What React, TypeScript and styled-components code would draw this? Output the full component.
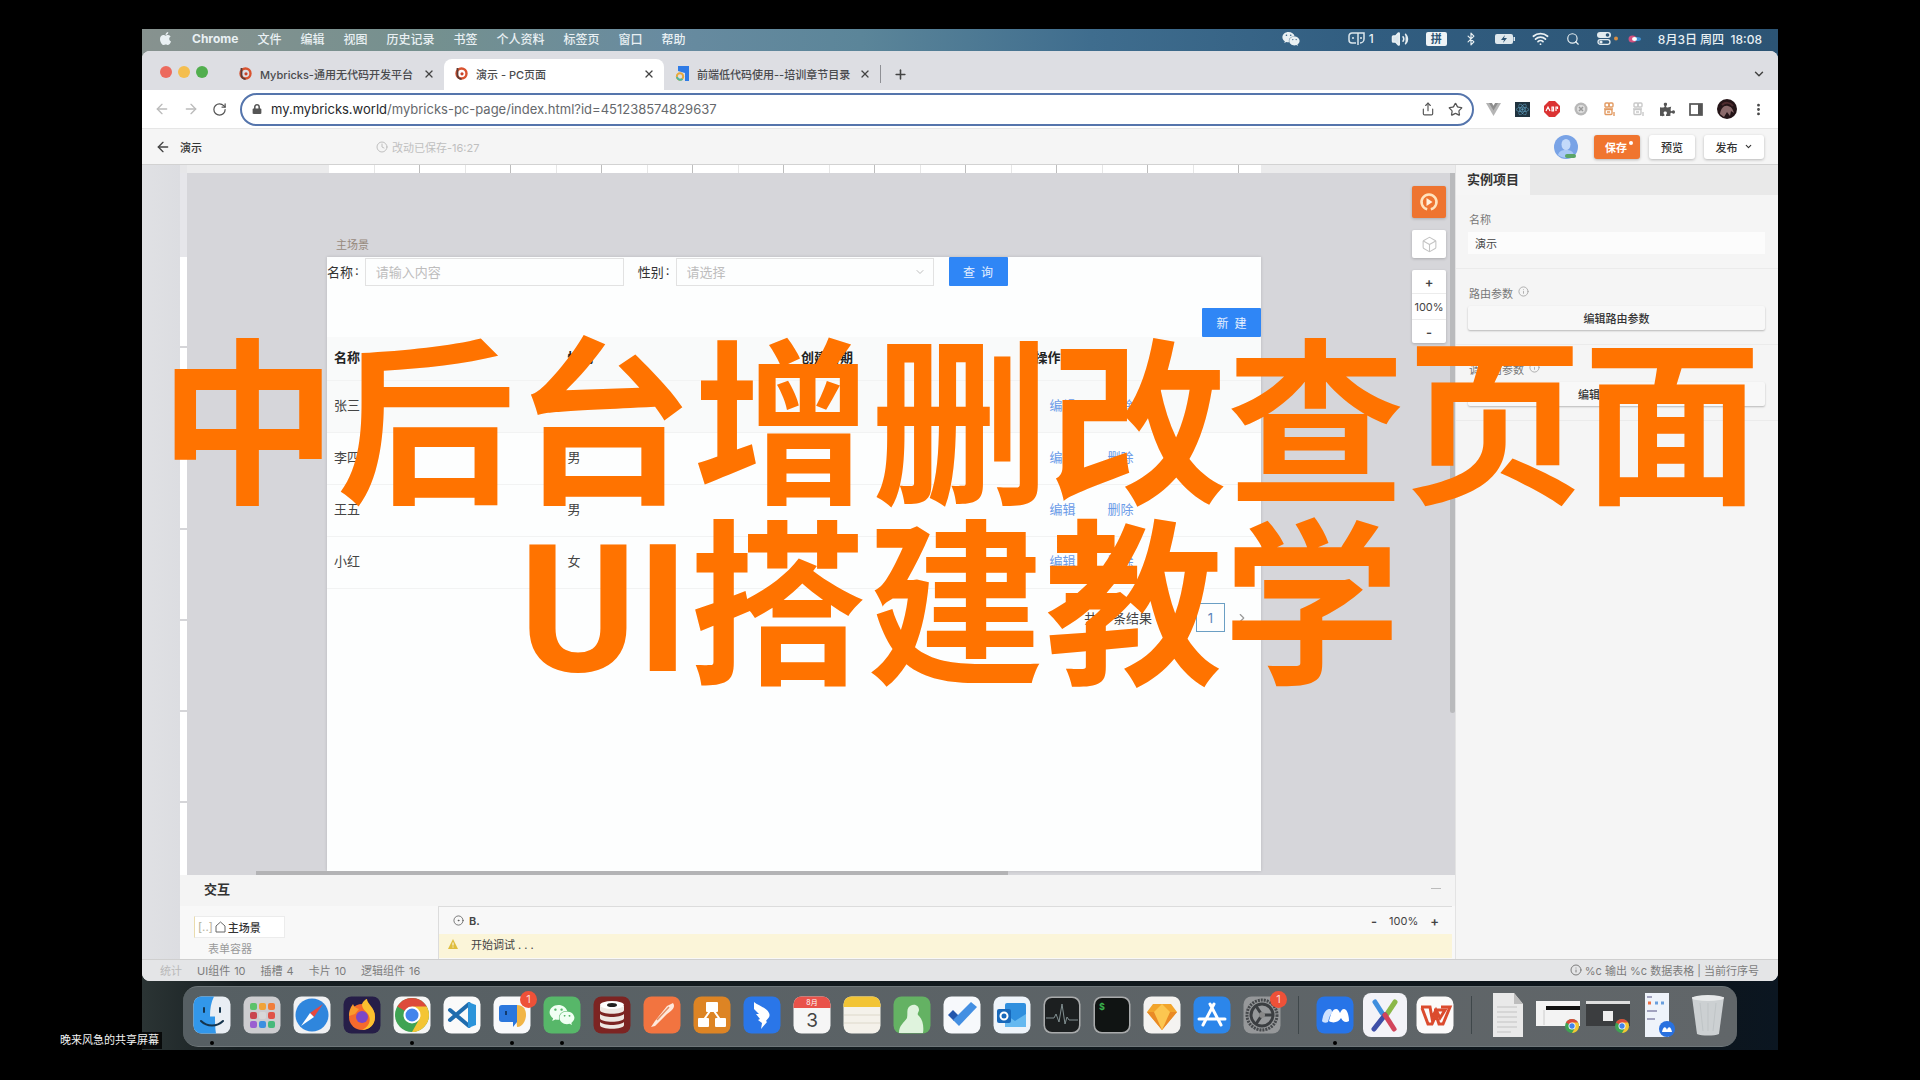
import React from "react";
import styled, { createGlobalStyle } from "styled-components";
import {
  ArrowLeft, ArrowRight, RotateCw, X, Plus, ChevronDown, ChevronLeft, ChevronRight, Share, Star,
  EllipsisVertical, Search, Volume2, Wifi, Bluetooth, Clock, Info, Box, CircleDot,
} from "lucide-react";
import { FaApple, FaWeixin, FaLock, FaPuzzlePiece, FaReact } from "react-icons/fa";

const Global = createGlobalStyle`
  *, *::before, *::after { box-sizing: border-box; }
  body { margin: 0; background: #000; }
  body, button, input, select, table {
    font-family: Inter, "Noto Sans CJK SC", sans-serif;
    font-size: 11px;
    color: #444;
  }
  button, input, select { margin: 0; padding: 0; border: 0; background: none; outline: none; }
  button { display: inline-flex; align-items: center; justify-content: center; cursor: pointer; }
  svg { display: block; flex: none; }
`;

const Page = styled.div`
  position: relative;
  display: flex;
  min-height: 100vh;
  padding: 29px 142px 30px;
  background: #000;
`;

const Desktop = styled.main`
  flex: 1;
  min-width: 0;
  display: flex;
  flex-direction: column;
  background: linear-gradient(90deg, #2b3434 0, #161e21 6%, #11191d 50%, #0d151b 94%, #0b1621 100%);
`;

/* ---------- system menu bar ---------- */

const MenuBar = styled.header`
  display: flex;
  align-items: center;
  height: 28px;
  margin-bottom: -6px;
  padding: 0 16px 9px;
  color: #e9f0f3;
  background: linear-gradient(90deg, #87928f 0, #74908f 18%, #688ba0 32%, #5b8599 44%, #3f6d8e 58%, #315d80 75%, #2c5474 100%);
`;

const MenuList = styled.nav`
  flex: 1;
  display: flex;
  align-items: center;
  gap: 19px;
`;

const MenuItem = styled.a<{ $strong?: boolean }>`
  color: inherit;
  text-decoration: none;
  white-space: nowrap;
  font-size: 12px;
  font-weight: ${(p) => (p.$strong ? 700 : 500)};
`;

const StatusList = styled.div`
  display: flex;
  align-items: center;
  gap: 17px;
  font-size: 12px;
  font-weight: 500;
  white-space: nowrap;
`;

const StatusGap = styled.span`
  width: 14px;
`;

const StatusPair = styled.span`
  display: flex;
  align-items: center;
  gap: 4px;
`;

const InputMethod = styled.span`
  width: 21px;
  height: 14px;
  border-radius: 2px;
  background: #eef3f6;
  color: #2c5474;
  font-size: 11px;
  font-weight: 700;
  line-height: 14px;
  text-align: center;
`;

/* ---------- browser window ---------- */

const Browser = styled.section`
  flex: 1;
  min-height: 0;
  display: flex;
  flex-direction: column;
  overflow: hidden;
  border-radius: 8px;
  background: #f5f5f5;
`;

const TabStrip = styled.div`
  display: flex;
  align-items: flex-end;
  height: 39px;
  flex: none;
  padding: 0 12px 0 18px;
  background: #dddee3;
`;

const Lights = styled.div`
  display: flex;
  align-items: center;
  gap: 6px;
  height: 37px;
  margin-right: 20px;
`;

const Light = styled.span<{ $color: string }>`
  width: 12px;
  height: 12px;
  border-radius: 50%;
  background: ${(p) => p.$color};
`;

const Tab = styled.div<{ $active?: boolean }>`
  display: flex;
  align-items: center;
  gap: 8px;
  width: ${(p) => (p.$active ? 220 : 216)}px;
  height: 31px;
  padding: 0 9px 2px 11px;
  border-radius: 8px 8px 0 0;
  background: ${(p) => (p.$active ? "#fff" : "transparent")};
`;

const TabTitle = styled.span`
  flex: 1;
  overflow: hidden;
  white-space: nowrap;
  color: #4a4b4e;
  font-weight: 500;
`;

const StripButton = styled.button<{ $divided?: boolean }>`
  height: 18px;
  margin-bottom: 7px;
  padding: 0 ${(p) => (p.$divided ? 12 : 0)}px;
  border-left: ${(p) => (p.$divided ? "1px solid #8f9095" : "0")};
`;

const Spacer = styled.div`
  flex: 1;
`;

const AddressRow = styled.div`
  display: flex;
  align-items: center;
  gap: 12px;
  height: 39px;
  flex: none;
  padding: 0 12px;
  background: #fff;
  border-bottom: 1px solid #e6e6e6;
`;

const NavButtons = styled.div`
  display: flex;
  gap: 13px;
`;

const AddressBox = styled.label`
  flex: 1;
  display: flex;
  align-items: center;
  height: 33px;
  margin-left: 1px;
  padding: 0 9px 0 10px;
  border: 2px solid #5575ac;
  border-radius: 17px;
  font-size: 13px;
`;

const Host = styled.span`
  margin-left: 9px;
  color: #25272a;
`;

const AddressInput = styled.input`
  flex: 1;
  font-size: 13px;
  color: #65686c;
`;

const AddressActions = styled.span`
  display: flex;
  gap: 13px;
`;

const Extensions = styled.div`
  display: flex;
  align-items: center;
  gap: 14px;
`;

/* ---------- application header ---------- */

const AppHeader = styled.div`
  display: flex;
  align-items: center;
  height: 36px;
  flex: none;
  padding: 0 14px 0 13px;
  background: #f5f5f5;
  border-bottom: 1px solid #d2d2d2;
`;

const PageName = styled.span`
  width: 196px;
  margin-left: 9px;
  color: #333;
  font-weight: 500;
`;

const SavedNote = styled.span`
  flex: 1;
  display: flex;
  align-items: center;
  gap: 4px;
  color: #bfbfbf;
`;

const UserBadge = styled.span`
  margin-right: 7px;
`;

const HeaderButton = styled.button<{ $primary?: boolean; $width: number }>`
  gap: 6px;
  width: ${(p) => p.$width}px;
  height: 24px;
  margin-left: 9px;
  border-radius: 3px;
  font-weight: ${(p) => (p.$primary ? 700 : 500)};
  color: ${(p) => (p.$primary ? "#fff" : "#333")};
  background: ${(p) => (p.$primary ? "#f0752f" : "#fff")};
  box-shadow: 0 1px 3px rgba(0, 0, 0, 0.25);
`;

const UnsavedDot = styled.span`
  width: 4px;
  height: 4px;
  margin: -8px -4px 0 -4px;
  border-radius: 50%;
  background: #fff;
`;

/* ---------- workspace ---------- */

const Workspace = styled.div`
  flex: 1;
  min-height: 0;
  display: flex;
`;

const ComponentRail = styled.aside`
  width: 38px;
  flex: none;
  background: linear-gradient(90deg, #e0e1e4, #dcdde1);
`;

const Center = styled.div`
  flex: 1;
  min-width: 0;
  display: flex;
  flex-direction: column;
`;

const Stage = styled.div`
  position: relative;
  flex: 1;
  min-height: 0;
  display: grid;
  grid-template-columns: 7px 1fr;
  grid-template-rows: 8px 1fr;
  background: #d6d6da;
`;

const Corner = styled.div`
  background: #e6e6e8;
`;

const TopRuler = styled.div`
  display: flex;
  padding: 0 194px 0 142px;
  background: #ebebec;
`;

const TopTicks = styled.div`
  flex: 1;
  background:
    repeating-linear-gradient(90deg, transparent 0 90px, #bdbdbd 90px 91px),
    repeating-linear-gradient(90deg, #fff 0 45px, #e6e6e6 45px 46px, #fff 46px 91px);
`;

const SideRuler = styled.div`
  display: flex;
  padding-top: 84px;
  background: #e6e6ea;
`;

const SideTicks = styled.div`
  flex: 1;
  background: repeating-linear-gradient(180deg, #fff 0 89px, #d5d5d8 89px 91px);
`;

const Canvas = styled.div`
  display: flex;
  flex-direction: column;
  padding: 64px 194px 4px 140px;
`;

const SceneName = styled.div`
  height: 20px;
  padding-left: 9px;
  line-height: 17px;
  color: #96897c;
`;

const Scene = styled.div`
  flex: 1;
  background: #fdfefe;
  box-shadow: 0 0 3px rgba(0, 0, 0, 0.15);
  font-size: 13px;
`;

const HorizontalScroll = styled.div`
  position: absolute;
  left: 76px;
  bottom: 0;
  width: 59%;
  height: 4px;
  background: #b3b3b5;
`;

const VerticalScroll = styled.div`
  position: absolute;
  right: 0;
  top: 8px;
  width: 5px;
  height: 76%;
  border-radius: 0 0 3px 3px;
  background: #b9babc;
`;

const Filters = styled.form`
  display: flex;
  align-items: center;
  height: 29px;
`;

const FieldLabel = styled.label`
  display: flex;
  gap: 2px;
  color: #333;
  font-size: 13px;
  white-space: nowrap;
  &::after { content: ":"; }
`;

const TextField = styled.input`
  width: 259px;
  height: 28px;
  margin: 0 14px 0 6px;
  padding: 0 10px;
  border: 1px solid #e2e2e2;
  font-size: 13px;
  &::placeholder { color: #bdbdbd; }
`;

const SelectWrap = styled.span`
  position: relative;
  margin: 0 15px 0 6px;
  svg { position: absolute; right: 8px; top: 8px; color: #bfbfbf; pointer-events: none; }
`;

const SelectField = styled.select`
  display: block;
  width: 258px;
  height: 28px;
  padding: 0 10px;
  appearance: none;
  border: 1px solid #e2e2e2;
  color: #bdbdbd;
  font-size: 13px;
`;

const PrimaryButton = styled.button`
  gap: 6px;
  width: 59px;
  height: 29px;
  border-radius: 1px;
  background: #2f86f6;
  color: #e6f0ff;
  font-size: 12px;
`;

const CreateRow = styled.div`
  display: flex;
  justify-content: flex-end;
  padding-top: 22px;
`;

const Table = styled.table`
  width: 100%;
  table-layout: fixed;
  border-collapse: collapse;
  th, td {
    height: 52px;
    padding: 0 7px 3px;
    border-bottom: 1px solid #f2f3f3;
    color: #444;
    font-size: 13px;
    font-weight: 400;
    text-align: left;
  }
  th { height: 43px; background: #f9fafa; color: #222; font-weight: 600; }
  tbody tr:first-child td { background: #f9fafa; }
`;

const RowActions = styled.span`
  display: flex;
  gap: 32px;
  padding-left: 15px;
`;

const RowLink = styled.a`
  color: #6b9be8;
  text-decoration: none;
`;

const Pagination = styled.div`
  display: flex;
  align-items: center;
  justify-content: flex-end;
  height: 30px;
  margin-top: 14px;
  padding-right: 2px;
  color: #444;
`;

const PageArrow = styled.button`
  width: 34px;
  height: 29px;
  color: #999;
`;

const PageNumber = styled.button`
  width: 29px;
  height: 29px;
  border: 1px solid #6b9fc4;
  color: #5c83b8;
  font-size: 13px;
`;

const PageTotal = styled.span`
  margin-right: 10px;
  font-size: 13px;
`;

const StageTools = styled.div`
  position: absolute;
  right: 9px;
  top: 21px;
  display: flex;
  flex-direction: column;
  gap: 12px;
`;

const ToolButton = styled.button<{ $primary?: boolean }>`
  width: 34px;
  height: ${(p) => (p.$primary ? 32 : 28)}px;
  border-radius: 2px;
  color: #c4c4c4;
  background: ${(p) => (p.$primary ? "#ee7430" : "#fff")};
  box-shadow: 0 1px 3px rgba(0, 0, 0, 0.2);
`;

const ZoomGroup = styled.div`
  display: grid;
  grid-template-rows: 23px 27px 23px;
  width: 34px;
  border-radius: 2px;
  background: #fff;
  box-shadow: 0 1px 3px rgba(0, 0, 0, 0.2);
`;

const ZoomValue = styled.output`
  display: flex;
  align-items: center;
  justify-content: center;
  border: solid #ececec;
  border-width: 1px 0;
`;

/* ---------- interaction panel ---------- */

const Interaction = styled.section`
  flex: none;
  display: flex;
  flex-direction: column;
  height: 84px;
  background: #f8f8f8;
`;

const InteractionHead = styled.div`
  display: flex;
  align-items: center;
  justify-content: space-between;
  height: 31px;
  padding: 0 14px 4px 24px;
  background: #f4f4f4;
`;

const InteractionTitle = styled.h2`
  margin: 0;
  color: #333;
  font-size: 13px;
  font-weight: 600;
`;

const Collapse = styled.button`
  width: 10px;
  height: 1px;
  background: #bbb;
`;

const InteractionBody = styled.div`
  flex: 1;
  display: flex;
`;

const SceneList = styled.div`
  width: 258px;
  padding: 10px 14px 0;
`;

const SceneTab = styled.button`
  justify-content: flex-start;
  gap: 2px;
  width: 91px;
  height: 22px;
  padding-left: 3px;
  border: 1px solid #ececec;
  border-left-color: #eadcae;
  background: #fff;
  color: #333;
  font-weight: 500;
`;

const Bracket = styled.span`
  color: #bdb9a6;
`;

const SceneChild = styled.div`
  padding: 3px 0 0 14px;
  line-height: 16px;
  color: #9a9a9a;
`;

const Flow = styled.div`
  flex: 1;
  margin-right: 3px;
  border: solid #dcdcdc;
  border-width: 1px 0 0 1px;
`;

const FlowBar = styled.div`
  display: flex;
  align-items: center;
  gap: 12px;
  height: 27px;
  padding: 0 13px 0 14px;
`;

const FlowMark = styled.span`
  display: flex;
  align-items: center;
  gap: 5px;
  font-weight: 600;
`;

const FlowLog = styled.div`
  display: flex;
  align-items: center;
  gap: 13px;
  height: 24px;
  padding: 0 9px 4px;
  background: #fbf5d9;
  color: #444;
`;

const GlyphButton = styled.button`
  font-size: 13px;
  font-weight: 600;
`;

/* ---------- property panel ---------- */

const Properties = styled.aside`
  width: 323px;
  flex: none;
  border-left: 1px solid #e3e3e3;
  background: #f5f5f5;
`;

const PanelTabs = styled.div`
  display: flex;
  height: 30px;
  background: #e9e9e9;
`;

const PanelTab = styled.button`
  width: 74px;
  padding-bottom: 3px;
  background: #f6f6f6;
  color: #333;
  font-size: 13px;
  font-weight: 600;
`;

const PropertyGroup = styled.div`
  padding: 14px 13px 14px 12px;
  border-bottom: 1px solid #ebebeb;
`;

const PropertyLabel = styled.label`
  display: flex;
  align-items: center;
  gap: 5px;
  height: 20px;
  margin-bottom: 3px;
  padding-left: 1px;
  color: #777;
  svg { margin-bottom: 4px; color: #aaa; }
`;

const PropertyInput = styled.input`
  display: block;
  width: 100%;
  height: 22px;
  padding: 0 7px;
  background: #fcfcfc;
`;

const PropertyButton = styled.button`
  width: 100%;
  height: 24px;
  border-radius: 2px;
  background: #f8f8f8;
  box-shadow: 0 1px 2px rgba(0, 0, 0, 0.25);
  color: #333;
  font-weight: 500;
`;

const StatusBar = styled.footer`
  display: flex;
  align-items: center;
  gap: 15px;
  height: 22px;
  flex: none;
  padding: 0 19px 1px 18px;
  border-top: 1px solid #cfcfcf;
  background: #e4e5e7;
  color: #7c7c7c;
`;

const Count = styled.span`
  display: flex;
  align-items: baseline;
  gap: 4px;
`;

const Faint = styled.span`
  color: #b9b9b9;
`;

const Hint = styled.span`
  display: flex;
  align-items: center;
  gap: 3px;
  margin-left: auto;
`;

/* ---------- dock ---------- */

const DockArea = styled.div`
  display: flex;
  justify-content: center;
  height: 69px;
  flex: none;
  padding-top: 5px;
`;

const Dock = styled.div`
  display: flex;
  gap: 12px;
  height: 61px;
  padding: 9px 10px;
  border-radius: 15px;
  background: linear-gradient(90deg, #565f63, #616669);
  border: 1px solid #6f777a;
  border-width: 1px 0;
`;

const DockItem = styled.button<{ $running?: boolean }>`
  position: relative;
  width: 38px;
  height: 38px;
  &::after {
    content: "";
    display: ${(p) => (p.$running ? "block" : "none")};
    position: absolute;
    left: 17px;
    bottom: -11px;
    width: 4px;
    height: 4px;
    border-radius: 50%;
    background: #000;
  }
`;

const Badge = styled.span`
  position: absolute;
  right: -6px;
  top: -5px;
  width: 17px;
  height: 17px;
  border-radius: 50%;
  background: #ee5138;
  color: #ffd9d0;
  line-height: 17px;
`;

const DockDivider = styled.span`
  width: 11px;
  margin: 0 0 3px;
  background: linear-gradient(#3f474a, #3f474a) center / 1px 100% no-repeat;
`;

const ShareLabel = styled.div`
  position: absolute;
  left: 60px;
  bottom: 31px;
  padding-right: 3px;
  background: rgba(0, 0, 0, 0.8);
  color: #f3f3f3;
  line-height: 17px;
`;

const Headline = styled.h1`
  position: absolute;
  inset: 0;
  display: flex;
  align-items: center;
  justify-content: center;
  margin: 0;
  padding-bottom: 40px;
  pointer-events: none;
  color: #ff7300;
  font-family: Roboto, "Noto Sans CJK SC", sans-serif;
  font-size: 178px;
  font-weight: 700;
  line-height: 181px;
  text-align: center;
  white-space: nowrap;
`;

/* ---------- drawings ---------- */

const BrickLogo = () => (
  <svg width="13" height="13" viewBox="0 0 13 13">
    <circle cx="6.5" cy="6.5" r="5" fill="none" stroke="#d9532f" strokeWidth="2.4" />
    <path d="M2.5 1v7a4 4 0 0 0 4 4" fill="none" stroke="#5b3b36" strokeWidth="1.8" />
    <circle cx="7" cy="6.8" r="1.6" fill="#c8432a" />
  </svg>
);

const DocLogo = () => (
  <svg width="14" height="15" viewBox="0 0 14 15">
    <path d="M3 0h11v15h-4V7L3 5z" fill="#2f7be6" />
    <circle cx="5" cy="10.5" r="3.2" fill="none" stroke="#e8a93a" strokeWidth="2" />
    <path d="M2 11a3.4 3.4 0 0 0 5.5 2" fill="none" stroke="#49b9a2" strokeWidth="2" />
  </svg>
);

const Avatar = () => (
  <svg width="24" height="24" viewBox="0 0 24 24">
    <circle cx="12" cy="12" r="12" fill="#79a3e6" />
    <ellipse cx="12" cy="9.5" rx="4.5" ry="5.5" fill="#c3dafa" />
    <path d="M4 20c1-4 4-5 8-5s7 1 8 5a12 12 0 0 1-16 0z" fill="#a9c8f5" />
    <rect x="11" y="19" width="11" height="4" rx="2" fill="#5aa567" />
  </svg>
);

const ShareScreen = () => (
  <svg width="17" height="14" viewBox="0 0 17 14" fill="none" stroke="#dbe6ec" strokeWidth="1.5">
    <path d="M8 11H4a3 3 0 0 1-3-3V4a3 3 0 0 1 3-3h12v6a4 4 0 0 1-4 4" />
    <path d="M10 1v12M4 6h2M12 6h2" />
  </svg>
);

const Battery = () => (
  <svg width="20" height="10" viewBox="0 0 20 10">
    <rect width="18" height="10" rx="2" fill="#dfe8ed" />
    <rect x="18.5" y="3" width="1.5" height="4" fill="#dfe8ed" />
    <path d="M10 1 6 6h3l-1 3 4-5H9z" fill="#2c5474" />
  </svg>
);

const Controls = () => (
  <svg width="21" height="13" viewBox="0 0 21 13">
    <rect width="14" height="6" rx="3" fill="#e3ebef" />
    <circle cx="10.5" cy="3" r="1.8" fill="#2c5474" />
    <rect x="1" y="7.7" width="12" height="4.6" rx="2.3" fill="none" stroke="#e3ebef" strokeWidth="1.3" />
    <circle cx="4" cy="10" r="1.6" fill="#e3ebef" />
    <circle cx="19" cy="6.5" r="2" fill="#d98f45" />
  </svg>
);

const StatusTail = styled.span`
  display: flex;
  align-items: center;
  gap: 10px;
`;

const Siri = () => (
  <svg width="13" height="10" viewBox="0 0 13 10">
    <ellipse cx="4.5" cy="5" rx="4" ry="3.5" fill="#d1507f" />
    <ellipse cx="9" cy="5" rx="4" ry="2" fill="#3f8fd0" />
    <ellipse cx="6.5" cy="5" rx="2.5" ry="2" fill="#fff" />
  </svg>
);

const VueMark = () => (
  <svg width="15" height="13" viewBox="0 0 15 13">
    <path d="M0 0h15L7.5 13z" fill="#b5b5b5" />
    <path d="M3 0h2.8l1.7 3 1.7-3H12L7.5 7.5z" fill="#8d8d8d" />
    <path d="M6 0h3L7.5 2.5z" fill="#fff" />
  </svg>
);

const Adblock = () => (
  <svg width="16" height="16" viewBox="0 0 16 16">
    <path d="M5 0h6l5 5v6l-5 5H5l-5-5V5z" fill="#db3333" />
    <path d="m2 10 2-4 2 4M8 10V6h1.5v4zM12 10V6h1.5v2" fill="none" stroke="#fff" strokeWidth="1.2" />
  </svg>
);

const ReactBadge = styled.span`
  display: flex;
  align-items: center;
  justify-content: center;
  width: 15px;
  height: 15px;
  background: #20333f;
  color: #5d9bbb;
`;

const Medal = () => (
  <svg width="14" height="14" viewBox="0 0 14 14">
    <circle cx="7" cy="7" r="6.5" fill="#b8b8b8" />
    <circle cx="7" cy="7" r="4" fill="#dedede" />
    <path d="m5 5 4 4m0-4-4 4" stroke="#999" strokeWidth="1.5" />
  </svg>
);

const Stamp = ({ color }: { color: string }) => (
  <svg width="15" height="15" viewBox="0 0 15 15" fill="none" stroke={color} strokeWidth="1.4">
    <rect x="3" y="1" width="4" height="4" rx="1" />
    <rect x="7" y="1" width="4" height="4" rx="1" />
    <rect x="3" y="7.5" width="7" height="5" rx="1" />
    <path d="M2 7h9M5 10h3M12 10v4" />
  </svg>
);

const SidePanel = () => (
  <svg width="14" height="13" viewBox="0 0 14 13">
    <rect x="1" y="1" width="12" height="11" fill="none" stroke="#555" strokeWidth="1.7" />
    <rect x="9" y="1" width="4" height="11" fill="#555" />
  </svg>
);

const Profile = () => (
  <svg width="20" height="20" viewBox="0 0 20 20">
    <circle cx="10" cy="10" r="10" fill="#251518" />
    <path d="M3 15c1-6 4-9 8-8s5 4 6 7l-3-2-1 5-3-4-3 5z" fill="#8b6a6b" />
    <path d="M5 6c3-3 8-3 11 1" fill="none" stroke="#4e2b2e" strokeWidth="2" />
  </svg>
);

const PlayRing = () => (
  <svg width="20" height="20" viewBox="0 0 20 20">
    <path d="M8.2 17.3a7.5 7.5 0 1 1 3.6 0" fill="none" stroke="#ffe3bd" strokeWidth="2.5" />
    <path d="M7.500 6v8l6-4z" fill="#fff0dc" />
  </svg>
);

const House = () => (
  <svg width="11" height="12" viewBox="0 0 11 12">
    <path d="M5.5 1 10 5v6H1V5z" fill="none" stroke="#666" strokeLinejoin="round" />
  </svg>
);

const Warning = () => (
  <svg width="10" height="10" viewBox="0 0 10 10">
    <path d="M5 0 10 10H0z" fill="#dfbd3c" />
    <path d="M5 3.5v3M5 7.5v1" stroke="#fff" />
  </svg>
);

const Tile = ({ bg, children }: { bg: string; children?: React.ReactNode }) => (
  <svg width="38" height="38" viewBox="0 0 38 38">
    <rect x=".5" y=".5" width="37" height="37" rx="8" fill={bg} />
    {children}
  </svg>
);

const ChromeDisc = ({ r = 17, cx = 19, cy = 19 }) => (
  <g transform={`translate(${cx} ${cy}) scale(${r / 17})`}>
    <circle r="17" fill="#3fa353" />
    <path d="M0 0-14.7-8.5A17 17 0 0 1 14.7-8.5z" fill="#dd4a3a" />
    <path d="M0-8.5H14.7A17 17 0 0 1 0 17L7.4 4z" fill="#f4c534" />
    <circle r="8.5" fill="#fff" />
    <circle r="6.5" fill="#4384ec" />
  </g>
);

const pads = ["#5cc26a", "#f0a33a", "#f07d3a", "#c9464f", "#d8d8d8", "#e05348", "#9a5fd0", "#3d8fe0", "#46b97b"];

type App = { name: string; icon: React.ReactNode; running?: boolean; badge?: string };

const apps: App[] = [
  { name: "访达", running: true, icon: <Tile bg="#e9eef4"><path d="M8.5.5H21c-3 6-4 12-4 20h5c0 6 0 11 1 17H8.5a8 8 0 0 1-8-8v-21a8 8 0 0 1 8-8z" fill="#3297ea" /><path d="M8 25c6 6 16 6 22 0M11 12v4M27 12v4" fill="none" stroke="#15344d" strokeWidth="2" strokeLinecap="round" /></Tile> },
  { name: "启动台", icon: <Tile bg="#cdcdd0">{pads.map((c, i) => <rect key={c} x={7 + (i % 3) * 9} y={7 + Math.floor(i / 3) * 9} width="7" height="7" rx="2" fill={c} />)}</Tile> },
  { name: "Safari", icon: <Tile bg="#f0f1f3"><circle cx="19" cy="19" r="16.5" fill="#2f86dd" /><path d="m30 8-9 13-4-4z" fill="#e6493f" /><path d="m8 30 9-13 4 4z" fill="#fff" /></Tile> },
  { name: "Firefox", icon: <Tile bg="#261e48"><circle cx="19" cy="21" r="13" fill="#f56a2c" /><path d="M19 8c1-3 4-5 5-5 0 5 8 8 8 18 0 8-6 13-13 13 8-3 10-12 5-17-2-3-5-4-5-9z" fill="#fbc02f" /><path d="M6 20c0-6 2-9 4-12 1 3 3 4 6 5l-4 5z" fill="#fa9b2c" /><circle cx="19" cy="21" r="6" fill="#7b47c7" /></Tile> },
  { name: "Chrome", running: true, icon: <Tile bg="#f6f6f6"><ChromeDisc /></Tile> },
  { name: "VS Code", icon: <Tile bg="#fafafa"><path d="m7 14 19 16M7 24 26 8" stroke="#1f6cae" strokeWidth="4" strokeLinecap="round" /><path d="m25 6 8 3v20l-8 3z" fill="#2c94da" /></Tile> },
  { name: "腾讯会议", running: true, badge: "1", icon: <Tile bg="#f8f9fb"><path d="M22 9c9-1 11 5 11 10s-3 12-9 12z" fill="#f1b547" /><path d="M9 9h15v17l-4 5v-5H9a3 3 0 0 1-3-3V12a3 3 0 0 1 3-3z" fill="#2b77dd" /><path d="M13 15v4" stroke="#123b70" strokeWidth="2" /></Tile> },
  { name: "微信", running: true, icon: <Tile bg="#57b769"><FaWeixin x="6" y="6" size={26} color="#f0fff3" /></Tile> },
  { name: "Sequel", icon: <Tile bg="#7c2422"><path d="M7 10v4c0 5 24 5 24 0v-4zM7 18v4c0 5 24 5 24 0v-4c-4 4-20 4-24 0zM7 26v3c0 5 24 5 24 0v-3c-4 4-20 4-24 0z" fill="#eee7e2" /><ellipse cx="19" cy="9" rx="12" ry="4" fill="#fff" /><ellipse cx="19" cy="9" rx="5" ry="2" fill="#222" /></Tile> },
  { name: "Postman", icon: <Tile bg="#f27440"><path d="M30 7c3 4-1 8-6 11L12 30l-4 1 4-6L24 10z" fill="#ffe9dc" /><path d="m14 24 12-13" stroke="#e29068" strokeWidth="1.5" /></Tile> },
  { name: "draw.io", icon: <Tile bg="#dd8424"><path d="M19 12 10 25M19 12l9 13" stroke="#fff" strokeWidth="2" /><rect x="13" y="6" width="12" height="10" rx="1" fill="#fff" /><rect x="5" y="22" width="11" height="9" rx="1" fill="#fff" /><rect x="22" y="22" width="11" height="9" rx="1" fill="#fff" /></Tile> },
  { name: "钉钉", icon: <Tile bg="#2a76e8"><path d="M11 6c5 4 13 6 15 11 2 4-2 6-3 8l1 1-6 7 1-6-4-3 2-1-4-5 3 0-5-5z" fill="#fff" /></Tile> },
  { name: "日历", icon: <Tile bg="#f6f6f6"><path d="M.5 12V8.5a8 8 0 0 1 8-8h21a8 8 0 0 1 8 8V12z" fill="#e9524a" /><text x="19" y="9" textAnchor="middle" fontSize="7" fill="#fff">8月</text><text x="19" y="31" textAnchor="middle" fontSize="19" fill="#444">3</text></Tile> },
  { name: "备忘录", icon: <Tile bg="#f4f1ea"><path d="M.5 11V8.5a8 8 0 0 1 8-8h21a8 8 0 0 1 8 8V11z" fill="#f2c435" /><path d="M1 19h36M1 27h36" stroke="#ddd8ca" /></Tile> },
  { name: "Dove", icon: <Tile bg="#64b263"><path d="M6 37c0-8 5-10 8-15 1-5-1-9 3-12 5-3 9 0 9 4 0 2-2 3-1 5 5 4 6 12 5 18z" fill="#dff3dd" /></Tile> },
  { name: "待办", icon: <Tile bg="#f7f9fc"><path d="m5 19 5-5 6 6-5 5z" fill="#2457ad" /><path d="m10 24 18-18 6 5-18 19z" fill="#448fe2" /></Tile> },
  { name: "Outlook", icon: <Tile bg="#eef4fa"><rect x="12" y="7" width="21" height="24" rx="2" fill="#2f8fde" /><path d="m12 18 10 7 11-7v13H12z" fill="#65b9f0" /><rect x="4" y="13" width="14" height="14" rx="2" fill="#1768ba" /><circle cx="11" cy="20" r="3.5" fill="none" stroke="#fff" strokeWidth="2" /></Tile> },
  { name: "活动监视器", icon: <Tile bg="#a9abac"><rect x="2" y="2" width="34" height="34" rx="7" fill="#1c1f20" /><path d="M3 22h8l2-4 3 8 3-18 3 20 2-7 2 3h9" fill="none" stroke="#829092" /></Tile> },
  { name: "iTerm", icon: <Tile bg="#a9abac"><rect x="2" y="2" width="34" height="34" rx="7" fill="#101413" /><text x="6" y="14" fontSize="9" fontWeight="700" fill="#39b24c">$</text></Tile> },
  { name: "Sketch", icon: <Tile bg="#f4f3f1"><path d="M10 8h18l6 8-15 18L4 16z" fill="#f2a52c" /><path d="M4 16h30L19 34z" fill="#e98a25" /><path d="m11 16 8-8 8 8-8 18z" fill="#fcc650" /></Tile> },
  { name: "App Store", icon: <Tile bg="#2c86ea"><path d="m21 8-11 21M17 8l11 21M6 23h26" stroke="#fff" strokeWidth="3" strokeLinecap="round" /></Tile> },
  { name: "系统设置", badge: "1", icon: <Tile bg="#96989a"><circle cx="19" cy="19" r="15" fill="none" stroke="#45484b" strokeWidth="3" strokeDasharray="2 1" /><circle cx="19" cy="19" r="11" fill="none" stroke="#3b3e41" strokeWidth="3" /><path d="M19 19h11M19 19l-6-9M19 19l-6 9" stroke="#3b3e41" strokeWidth="3" /><circle cx="19" cy="19" r="3" fill="#888" /></Tile> },
];

const pinned: App[] = [
  { name: "腾讯文档", running: true, icon: <Tile bg="#2774e8"><path d="M6 25c1-7 4-12 7-12s3 2 3 4c-2 2-3 5-4 9-2 1-5 1-6-1z" fill="#cfe2ff" /><path d="M13 25c2-8 4-12 7-12 2 0 3 2 4 4 1-2 2-4 4-4 3 0 5 6 5 12-3 2-6 1-8-3-2 4-8 6-12 3z" fill="#fff" /></Tile> },
  { name: "XMind", icon: <svg width="44" height="44" viewBox="0 0 44 44"><rect width="44" height="44" rx="8" fill="#f3f3f8" /><g fill="none" strokeWidth="5" strokeLinecap="round"><path d="m12 9 7 11" stroke="#3f8ede" /><path d="m32 9-8 12" stroke="#8bb848" /><path d="M22 22 11 36" stroke="#3e4fa8" /><path d="m22 22 9 14" stroke="#d2445b" /></g></svg> },
  { name: "WPS", icon: <Tile bg="#fbfafa"><path d="M5 11h9l2 11 4-8 4 8 5-8h-11" fill="none" stroke="#db4b2e" strokeWidth="3" /><path d="m6 12 6 16h4l4-9 3 9h4l7-17h-9" fill="none" stroke="#db4b2e" strokeWidth="3" /></Tile> },
];

const recents: App[] = [
  { name: "文稿", icon: <svg width="32" height="44" viewBox="0 0 32 44"><path d="M1 0h21l9 11v33H1z" fill="#e9e9e9" /><path d="M22 0v11h9z" fill="#bdbdbd" /><path d="M5 14h20M5 19h20M5 24h20M5 29h20M5 34h20M5 39h14" stroke="#cfcfcf" strokeWidth="1.5" /></svg> },
  { name: "浏览器窗口", icon: <svg width="44" height="36" viewBox="0 0 44 36"><path d="M0 4h44v25H0z" fill="#f3f3f3" /><path d="M10 9h34v4H10z" fill="#111" /><path d="M8 13v15" stroke="#ccc" /><ChromeDisc r={7} cx={36} cy={29} /></svg> },
  { name: "预览窗口", icon: <svg width="44" height="36" viewBox="0 0 44 36"><path d="M0 4h44v25H0z" fill="#3b3d3f" /><path d="M0 4h44v3H0z" fill="#ddd" /><path d="M17 14h10v10H17z" fill="#eee" /><ChromeDisc r={7} cx={36} cy={29} /></svg> },
  { name: "聊天窗口", icon: <svg width="34" height="44" viewBox="0 0 34 44"><path d="M4 0h24v44H4z" fill="#eef3fa" /><path d="M6 4h5M6 18h10M6 26h8" stroke="#88a" strokeWidth="1.5" /><path d="M7 10h3" stroke="#ef7045" strokeWidth="3" /><path d="M14 10h3M20 10h3" stroke="#699fdd" strokeWidth="3" /><circle cx="26" cy="36" r="8" fill="#2971df" /><path d="M21 39c1-6 4-6 5-2 1-4 4-4 5 2z" fill="#fff" /></svg> },
  { name: "废纸篓", icon: <svg width="34" height="42" viewBox="0 0 34 42"><path d="M1 3h32l-5 37c-5 2-17 2-22 0z" fill="#ccd0d2" /><ellipse cx="17" cy="4" rx="16" ry="3" fill="#e7e9ea" /><path d="m9 9 3 28M17 9v28M25 9l-3 28" stroke="#bfc4c6" /></svg> },
];

const menus = ["文件", "编辑", "视图", "历史记录", "书签", "个人资料", "标签页", "窗口", "帮助"];
const counts = [["UI组件", 10], ["插槽", 4], ["卡片", 10], ["逻辑组件", 16]];
const rows = [
  { name: "张三", gender: "" },
  { name: "李四", gender: "男" },
  { name: "王五", gender: "男" },
  { name: "小红", gender: "女" },
];

const DockApp = ({ name, icon, running, badge }: App) => (
  <DockItem aria-label={name} $running={running}>
    {icon}
    {badge && <Badge>{badge}</Badge>}
  </DockItem>
);

const BrowserTab = ({ title, icon, active }: { title: string; icon: React.ReactNode; active?: boolean }) => (
  <Tab $active={active}>
    {icon}
    <TabTitle>{title}</TabTitle>
    <button aria-label="关闭标签页"><X size={12} strokeWidth={2.5} /></button>
  </Tab>
);

export default function App() {
  return (
    <Page>
      <Global />
      <Desktop>
        <MenuBar>
          <MenuList>
            <FaApple size={15} />
            <MenuItem href="#" $strong>Chrome</MenuItem>
            {menus.map((m) => <MenuItem key={m} href="#">{m}</MenuItem>)}
          </MenuList>
          <StatusList>
            <FaWeixin size={18} />
            <StatusGap />
            <StatusPair><ShareScreen />1</StatusPair>
            <Volume2 size={18} fill="#dbe6ec" />
            <InputMethod>拼</InputMethod>
            <Bluetooth size={14} />
            <Battery />
            <Wifi size={17} strokeWidth={2.5} />
            <Search size={14} />
            <StatusTail><Controls /><Siri /></StatusTail>
            <span>8月3日 周四&nbsp; 18:08</span>
          </StatusList>
        </MenuBar>

        <Browser>
          <TabStrip>
            <Lights>
              <Light $color="#ec6a5e" />
              <Light $color="#f4be4f" />
              <Light $color="#51ae4e" />
            </Lights>
            <BrowserTab title="Mybricks-通用无代码开发平台" icon={<BrickLogo />} />
            <BrowserTab title="演示 - PC页面" icon={<BrickLogo />} active />
            <BrowserTab title="前端低代码使用--培训章节目录" icon={<DocLogo />} />
            <StripButton $divided aria-label="新标签页"><Plus size={15} strokeWidth={2.5} /></StripButton>
            <Spacer />
            <StripButton aria-label="搜索标签页"><ChevronDown size={14} strokeWidth={2.5} /></StripButton>
          </TabStrip>

          <AddressRow>
            <NavButtons>
              <button aria-label="后退"><ArrowLeft size={16} color="#bbb" /></button>
              <button aria-label="前进"><ArrowRight size={16} color="#bbb" /></button>
              <button aria-label="重新加载"><RotateCw size={15} color="#555" /></button>
            </NavButtons>
            <AddressBox>
              <FaLock size={10} color="#555" />
              <Host>my.mybricks.world</Host>
              <AddressInput aria-label="地址" defaultValue="/mybricks-pc-page/index.html?id=451238574829637" />
              <AddressActions>
                <Share size={14} color="#555" />
                <Star size={15} color="#555" />
              </AddressActions>
            </AddressBox>
            <Extensions>
              <VueMark />
              <ReactBadge><FaReact size={13} /></ReactBadge>
              <Adblock />
              <Medal />
              <Stamp color="#e29a62" />
              <Stamp color="#c9c9c9" />
              <FaPuzzlePiece size={15} color="#555" />
              <SidePanel />
              <Profile />
              <EllipsisVertical size={15} strokeWidth={2.5} />
            </Extensions>
          </AddressRow>

          <AppHeader>
            <button aria-label="返回"><ArrowLeft size={16} /></button>
            <PageName>演示</PageName>
            <SavedNote><Clock size={12} />改动已保存-16:27</SavedNote>
            <UserBadge><Avatar /></UserBadge>
            <HeaderButton $primary $width={46}>保存<UnsavedDot /></HeaderButton>
            <HeaderButton $width={46}>预览</HeaderButton>
            <HeaderButton $width={60}>发布<ChevronDown size={9} strokeWidth={3} /></HeaderButton>
          </AppHeader>

          <Workspace>
            <ComponentRail />
            <Center>
              <Stage>
                <Corner />
                <TopRuler><TopTicks /></TopRuler>
                <SideRuler><SideTicks /></SideRuler>
                <Canvas>
                  <SceneName>主场景</SceneName>
                  <Scene>
                    <Filters onSubmit={(e) => e.preventDefault()}>
                      <FieldLabel htmlFor="name">名称</FieldLabel>
                      <TextField id="name" placeholder="请输入内容" />
                      <FieldLabel htmlFor="gender">性别</FieldLabel>
                      <SelectWrap>
                        <SelectField id="gender"><option>请选择</option></SelectField>
                        <ChevronDown size={12} />
                      </SelectWrap>
                      <PrimaryButton type="submit"><span>查</span><span>询</span></PrimaryButton>
                    </Filters>
                    <CreateRow><PrimaryButton><span>新</span><span>建</span></PrimaryButton></CreateRow>
                    <Table>
                      <thead>
                        <tr><th>名称</th><th>性别</th><th>创建日期</th><th>操作</th></tr>
                      </thead>
                      <tbody>
                        {rows.map((r) => (
                          <tr key={r.name}>
                            <td>{r.name}</td>
                            <td>{r.gender}</td>
                            <td />
                            <td><RowActions><RowLink href="#">编辑</RowLink><RowLink href="#">删除</RowLink></RowActions></td>
                          </tr>
                        ))}
                      </tbody>
                    </Table>
                    <Pagination>
                      <PageTotal>共 4 条结果</PageTotal>
                      <PageArrow aria-label="上一页"><ChevronLeft size={14} /></PageArrow>
                      <PageNumber>1</PageNumber>
                      <PageArrow aria-label="下一页"><ChevronRight size={14} /></PageArrow>
                    </Pagination>
                  </Scene>
                </Canvas>
                <HorizontalScroll />
                <VerticalScroll />
                <StageTools>
                  <ToolButton $primary aria-label="调试"><PlayRing /></ToolButton>
                  <ToolButton aria-label="组件"><Box size={17} strokeWidth={1.5} /></ToolButton>
                  <ZoomGroup>
                    <GlyphButton>+</GlyphButton>
                    <ZoomValue>100%</ZoomValue>
                    <GlyphButton>-</GlyphButton>
                  </ZoomGroup>
                </StageTools>
              </Stage>

              <Interaction>
                <InteractionHead>
                  <InteractionTitle>交互</InteractionTitle>
                  <Collapse aria-label="收起" />
                </InteractionHead>
                <InteractionBody>
                  <SceneList>
                    <SceneTab><Bracket>[..]</Bracket><House />主场景</SceneTab>
                    <SceneChild>表单容器</SceneChild>
                  </SceneList>
                  <Flow>
                    <FlowBar>
                      <FlowMark><CircleDot size={11} strokeWidth={1.5} />B.</FlowMark>
                      <Spacer />
                      <GlyphButton>-</GlyphButton>
                      <span>100%</span>
                      <GlyphButton>+</GlyphButton>
                    </FlowBar>
                    <FlowLog><Warning />开始调试 . . .</FlowLog>
                  </Flow>
                </InteractionBody>
              </Interaction>
            </Center>

            <Properties>
              <PanelTabs><PanelTab>实例项目</PanelTab></PanelTabs>
              <PropertyGroup>
                <PropertyLabel htmlFor="project">名称</PropertyLabel>
                <PropertyInput id="project" defaultValue="演示" />
              </PropertyGroup>
              <PropertyGroup>
                <PropertyLabel htmlFor="route">路由参数<Info size={11} /></PropertyLabel>
                <PropertyButton id="route">编辑路由参数</PropertyButton>
              </PropertyGroup>
              <PropertyGroup>
                <PropertyLabel htmlFor="debug">调试用参数<Info size={11} /></PropertyLabel>
                <PropertyButton id="debug">编辑调试用参数</PropertyButton>
              </PropertyGroup>
            </Properties>
          </Workspace>

          <StatusBar>
            <Faint>统计</Faint>
            {counts.map(([label, n]) => <Count key={label}><span>{label}</span><span>{n}</span></Count>)}
            <Hint><Info size={12} />%c 输出 %c 数据表格 | 当前行序号</Hint>
          </StatusBar>
        </Browser>

        <DockArea>
          <Dock>
            {apps.map((a) => <DockApp key={a.name} {...a} />)}
            <DockDivider />
            {pinned.map((a) => <DockApp key={a.name} {...a} />)}
            <DockDivider />
            {recents.map((a) => <DockApp key={a.name} {...a} />)}
          </Dock>
        </DockArea>
      </Desktop>

      <ShareLabel>晚来风急的共享屏幕</ShareLabel>
      <Headline>中后台增删改查页面<br />UI搭建教学</Headline>
    </Page>
  );
}
